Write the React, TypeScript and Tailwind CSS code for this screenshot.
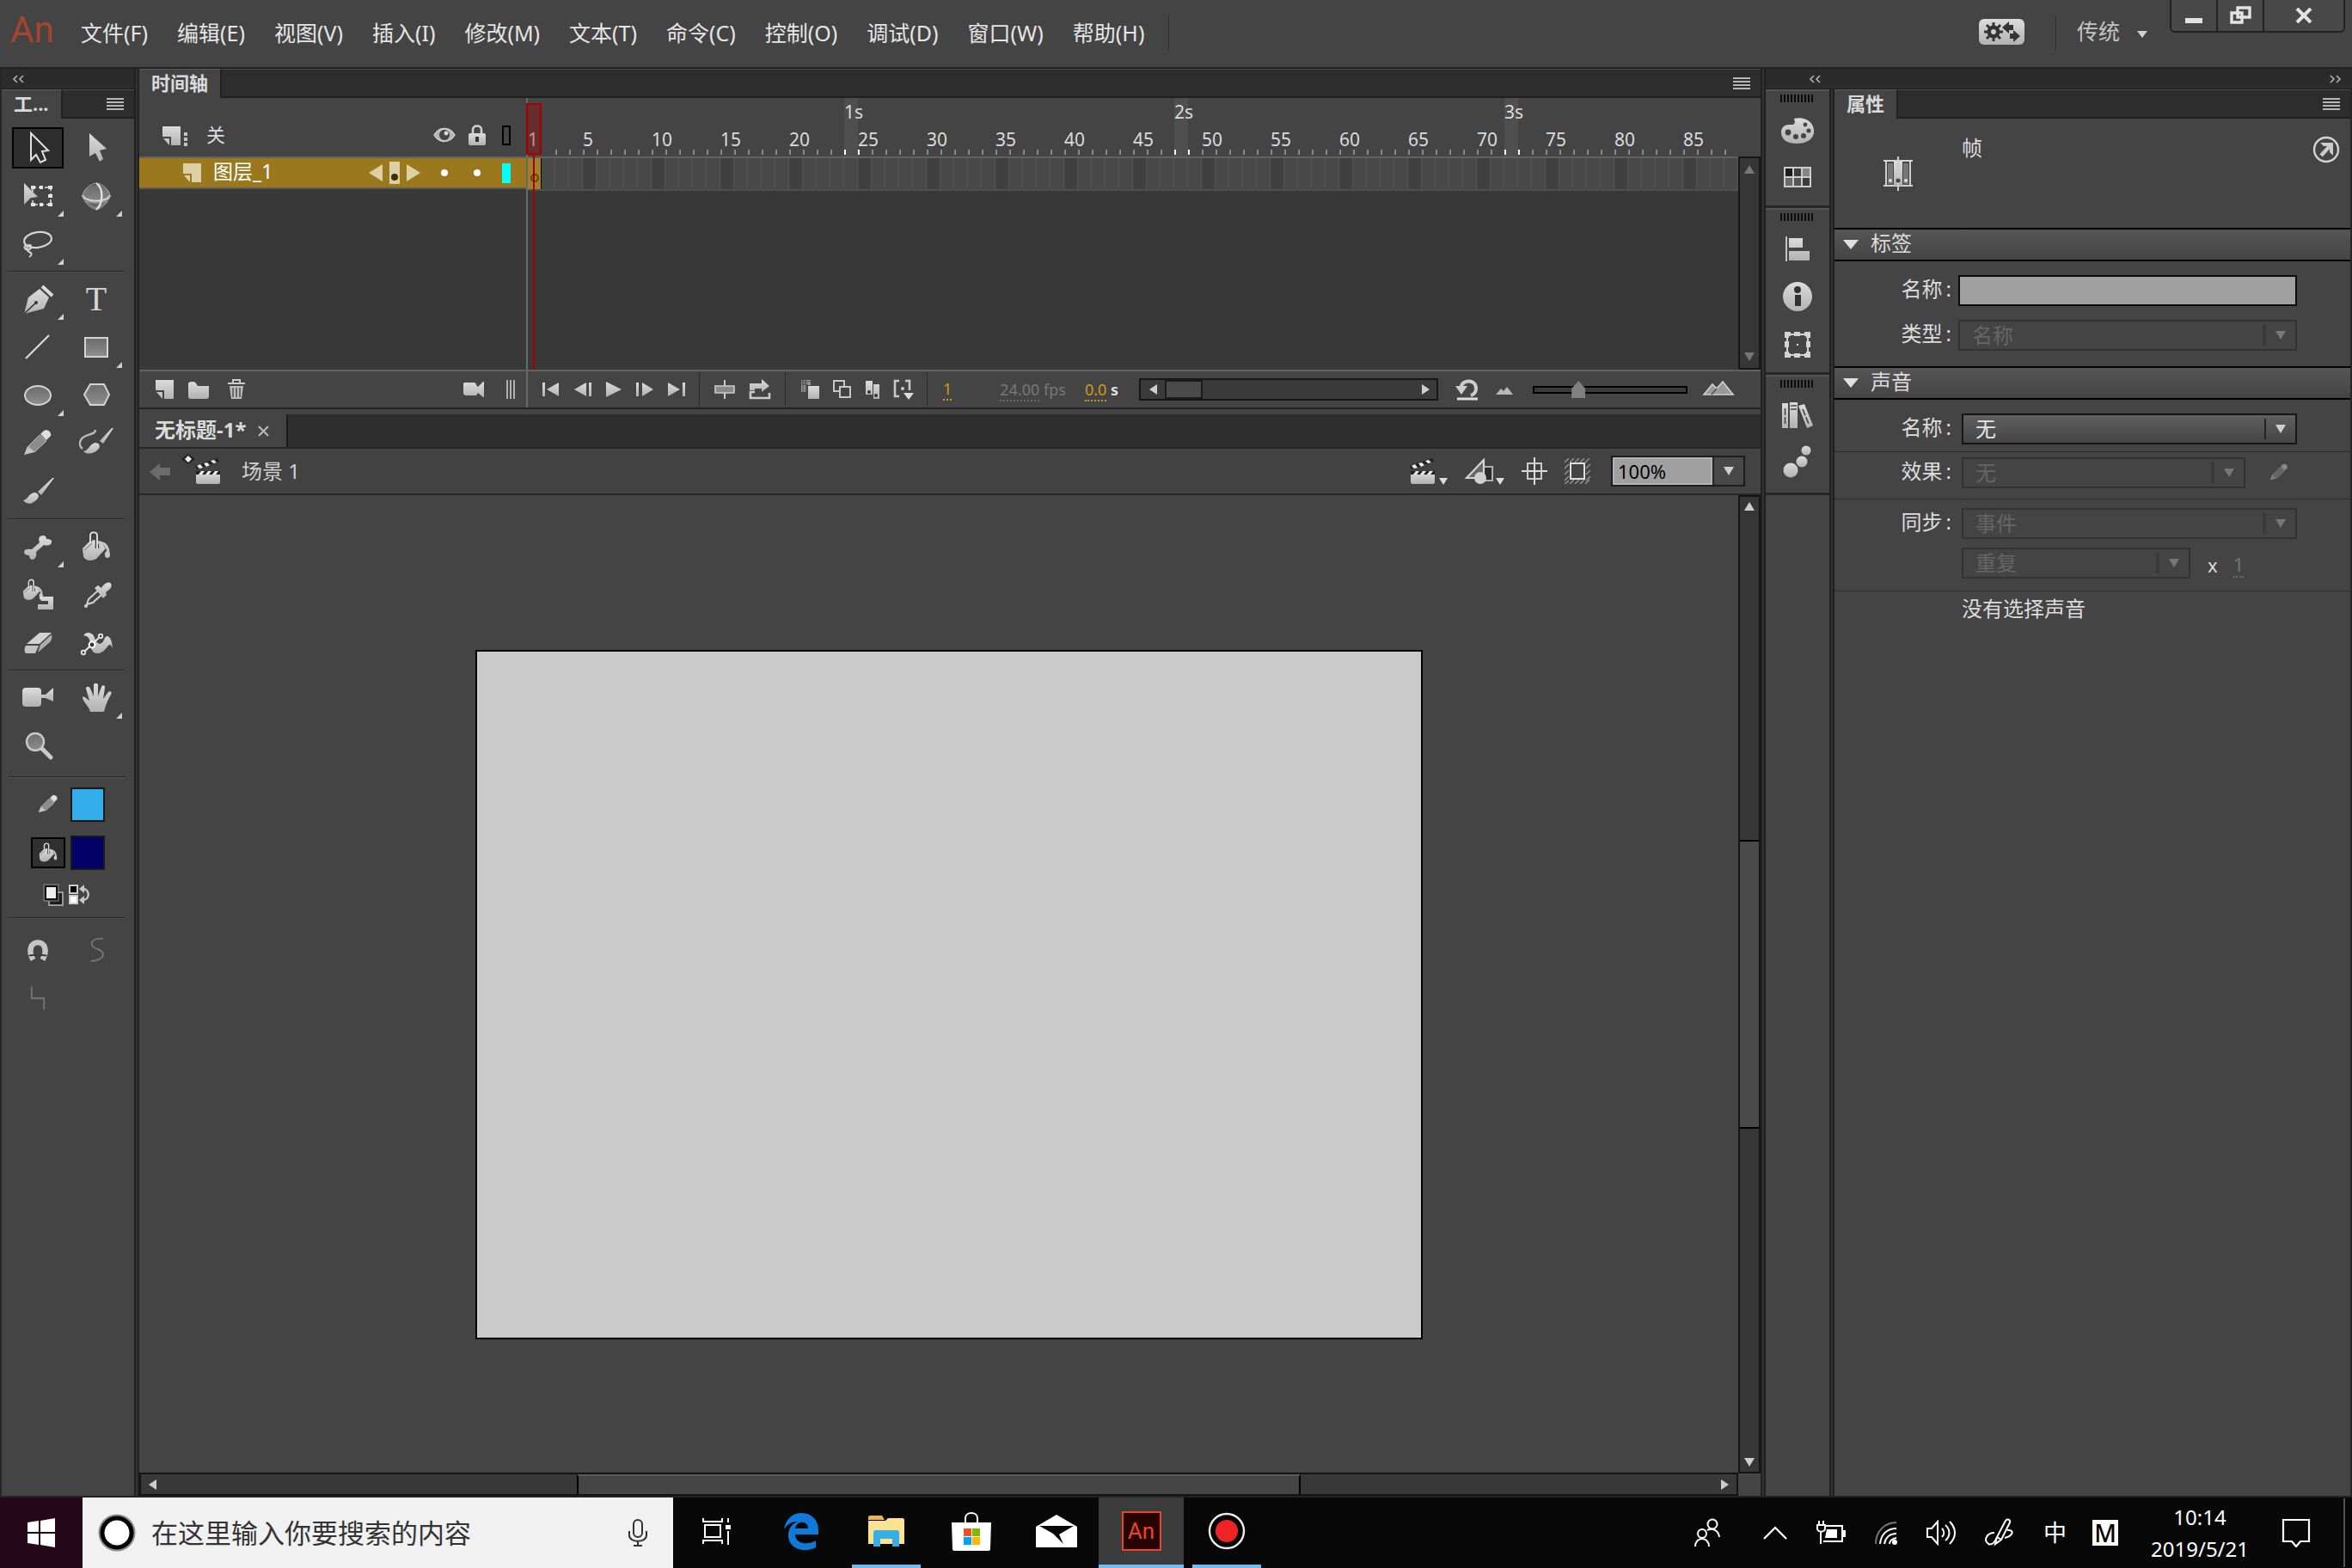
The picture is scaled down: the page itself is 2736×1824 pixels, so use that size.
import React from "react";

type Kids = { children?: React.ReactNode };

const L = "url(#light)";
const M = "url(#mid)";

function Defs() {
  return (
    <svg width="0" height="0" className="absolute" aria-hidden="true">
      <defs>
        <linearGradient id="light" x1="0" y1="0" x2="0" y2="1">
          <stop offset="0" stopColor="#dcdcdc" />
          <stop offset="1" stopColor="#b2b2b2" />
        </linearGradient>
        <linearGradient id="mid" x1="0" y1="0" x2="0" y2="1">
          <stop offset="0" stopColor="#6c6c6c" />
          <stop offset="1" stopColor="#8e8e8e" />
        </linearGradient>
      </defs>
    </svg>
  );
}

function Svg({ w = 40, h = 40, children }: { w?: number; h?: number } & Kids) {
  return (
    <svg width={w} height={h} viewBox={`0 0 ${w} ${h}`} fill="none" className="block shrink-0" aria-hidden="true">
      {children}
    </svg>
  );
}

const bucket = (
  <>
    <path d="M4 22 14 12l10 1 7 9-11 12c-5 3-13 3-15-3z" fill={L} />
    <path d="m6 24 9-8" stroke="#8f8f8f" strokeWidth="1.4" />
    <path d="M13 14V7c0-5 8-5 8 0v15" stroke="#333" strokeWidth="4.4" />
    <path d="M13 14V7c0-5 8-5 8 0v15" stroke="#dadada" strokeWidth="2.2" />
    <path d="M22 15c7 0 11 3 12 11" stroke="#c8c8c8" strokeWidth="3" />
    <ellipse cx="33" cy="29" rx="3" ry="4" fill="#c8c8c8" />
  </>
);

const I = {
  select: <path d="m12 3 20 20-7 1 4 10-6 3-5-9-6 6z" stroke="#e2e2e2" strokeWidth="2" />,
  sub: <path d="m12 3 20 18-8 2 4 10-4 3-5-10-7 4z" fill={L} />,
  transform: (
    <>
      <path d="M14 10h21v20H14z" stroke="#bbb" strokeWidth="2" strokeDasharray="4 3" />
      <path d="M12 8h5v4h-5zM22 8h4v4h-4zM32 8h5v4h-5zM32 18h5v4h-5zM12 28h5v4h-5zM22 28h4v4h-4zM32 28h5v4h-5z" fill="#e4e4e4" />
      <path d="m4 5 16 16-8 1-8 8z" fill={L} />
    </>
  ),
  globe: (
    <>
      <path d="M4 20a16 13 0 0 1 32 0L24 32h-8z" fill={M} />
      <path d="M7 25c4 4 22 4 26 0-3 4-8 8-13 9-5-1-10-5-13-9z" fill="#666" stroke="#aaa" />
      <path d="M4 19c2 9 30 9 32 0" stroke="#d8d8d8" strokeWidth="2.2" />
      <path d="M20 5c9 6 8 24 0 31" stroke="#e0e0e0" strokeWidth="2.4" />
      <path d="M20 5C12 6 5 13 4 20M20 5c8 1 15 8 16 15M4 20c2 8 9 14 16 16M36 20c-2 8-9 14-16 16" stroke="#aaa" strokeWidth="1" />
    </>
  ),
  lasso: (
    <>
      <ellipse cx="20" cy="15" rx="16" ry="9" transform="rotate(-8 20 15)" stroke="#d4d4d4" strokeWidth="2.2" />
      <path d="M6 21c-4 4 1 6 4 5s3-5 0-5-4 6 0 8 3 4 0 6" stroke="#d4d4d4" strokeWidth="2" />
    </>
  ),
  pen: (
    <>
      <path d="m4 37 5-19 13-10 11 10-6 13z" fill={L} />
      <path d="m4 37 14-13" stroke="#333" strokeWidth="1.6" />
      <circle cx="18" cy="24" r="2" fill="#333" />
      <path d="m25 5 12 11" stroke="#dcdcdc" strokeWidth="4" />
    </>
  ),
  line: <path d="M6 33 33 6" stroke="#dcdcdc" strokeWidth="2.2" />,
  rect: <path d="M7 9h26v22H7z" fill={M} stroke="#d4d4d4" strokeWidth="2" />,
  oval: <ellipse cx="20" cy="20" rx="15" ry="11" fill={M} stroke="#d4d4d4" strokeWidth="2" />,
  hex: <path d="m6 19 7-12h16l6 12-6 12H13z" fill={M} stroke="#d4d4d4" strokeWidth="2" />,
  pencil: (
    <>
      <path d="m9 23 13-13 8 7-14 13z" fill="#8c8c8c" stroke="#bdbdbd" strokeWidth="1" />
      <path d="m4 33 4-10 8 7z" fill="#c4c4c4" />
      <path d="m23 9 4-4c4-2 9 1 8 6l-5 5z" fill="#dedede" />
    </>
  ),
  paint: (
    <>
      <path d="M19 4c0 7-14 4-17 12-2 4-1 8 2 10" stroke="#bcbcbc" strokeWidth="2.4" />
      <path d="M38 2h2L28 20l-4-3z" fill={L} />
      <path d="M5 29c6 0 7-9 14-10 4 0 7 4 3 8s-12 7-17 2z" fill={L} />
    </>
  ),
  brush: (
    <>
      <path d="M37 4h2L24 24l-4-4z" fill={L} />
      <path d="M3 30c6-1 6-8 13-9 4 0 7 4 3 8s-10 8-16 1z" fill={L} />
    </>
  ),
  bone: (
    <path
      d="M4 26c0-3 4-4 9-3l9-8c-2-5 0-8 4-8 3 0 4 2 4 4 4 0 7 1 6 4-1 4-5 4-9 3l-9 8c1 5-1 8-4 9-3 0-4-3-4-5-3 0-6-1-6-4z"
      fill={L}
    />
  ),
  bucket,
  ink: (
    <>
      <g transform="scale(.72)">{bucket}</g>
      <path d="M22 22h16v15H20v-6h12v-4H22z" fill={L} />
      <path d="m18 22 6 6" stroke="#444" strokeWidth="2" />
    </>
  ),
  dropper: (
    <>
      <path d="m9 31 2-6 11-10 5 4-11 10z" stroke="#d4d4d4" strokeWidth="2" />
      <path d="m18 12 4-3 4 3c3-6 9-8 11-5s-1 7-6 10l1 3-4 4z" fill={L} />
      <circle cx="8" cy="33" r="2" fill="#d4d4d4" />
    </>
  ),
  eraser: (
    <>
      <path d="m7 21 15-13h14L22 21z" fill="#d2d2d2" />
      <path d="M6 23h15l-4 9H7c-2 0-3-2-2-7z" fill="#c2c2c2" />
      <path d="m23 22 13-12c1 4 0 7-2 9L20 31z" fill="#adadad" />
    </>
  ),
  widthTool: (
    <>
      <path d="M5 12c2-6 11-5 13 2s8 10 11 2 9-4 10 10c-5-12-6 6-18 6-9 0-7-14-10-18-1-2-5-3-6-2z" fill={L} />
      <path d="m5 31 20-19" stroke="#e8e8e8" strokeWidth="2" />
      <circle cx="15" cy="22" r="3.4" fill="#333" stroke="#fff" strokeWidth="2" />
      <circle cx="5" cy="31" r="2.2" fill="#333" stroke="#ddd" strokeWidth="2" />
      <circle cx="25" cy="12" r="2.2" fill="#333" stroke="#ddd" strokeWidth="2" />
    </>
  ),
  camera: (
    <>
      <rect x="2" y="8" width="22" height="22" rx="4" fill={L} />
      <path d="M24 16h5l9-8v16l-9-4h-5z" fill={L} />
    </>
  ),
  hand: (
    <path
      d="M13 36c-1-6-9-12-9-17 2-2 6 3 8 4L8 9c0-3 4-3 5 0l4 9V5c0-3 5-3 5 0v13l4-11c1-3 5-2 4 1l-2 13 6-8c2-2 5 0 3 3-4 7-6 12-8 20z"
      fill={L}
    />
  ),
  zoom: (
    <>
      <ellipse cx="17" cy="15" rx="10" ry="10" fill={M} stroke="#c8c8c8" strokeWidth="2.4" />
      <path d="m25 23 10 10" stroke="#cacaca" strokeWidth="5" strokeLinecap="round" />
    </>
  ),
  magnet: (
    <>
      <path d="M13 33C5 18 11 8 20 8s15 10 7 25" stroke="#c6c6c6" strokeWidth="8" />
      <path d="m7 27 9-1M24 26l9 1" stroke="#333" strokeWidth="2.4" />
    </>
  ),
  smooth: <path d="M30 2c-11 0-19 3-16 10s16 5 16 13c0 6-9 10-18 10" stroke="#747474" strokeWidth="2.4" />,
  straight: <path d="M11 2v17h18v17" stroke="#747474" strokeWidth="2.4" />,
};

function Tool({ label, icon, more, active, dim }: { label: string; icon?: React.ReactNode; more?: boolean; active?: boolean; dim?: boolean }) {
  return (
    <button
      aria-label={label}
      disabled={dim}
      className="relative flex h-14 w-[68px] items-center justify-center"
    >
      <span className={active ? "flex h-12 w-[60px] items-center justify-center border-2 border-black bg-[#2d2d2d]" : "flex items-center justify-center"}>
        {icon ? <Svg>{icon}</Svg> : <span className="font-['Liberation_Serif',serif] text-[40px] leading-10 text-[#d6d6d6]">T</span>}
      </span>
      {more && <span className="absolute bottom-1 right-1 size-[7px] bg-[#d0d0d0] [clip-path:polygon(100%_0,100%_100%,0_100%)]" />}
    </button>
  );
}

function Rule() {
  return <div className="my-[3px] h-0.5 w-[136px] border-t border-[#2a2a2a] bg-[#4e4e4e]" />;
}

function Burger() {
  return (
    <button aria-label="面板菜单" className="flex flex-col gap-0.5">
      {[0, 1, 2, 3].map((n) => (
        <span key={n} className="h-0.5 w-5 bg-[#b8b8b8]" />
      ))}
    </button>
  );
}

function Chev({ right }: { right?: boolean }) {
  return (
    <Svg w={14} h={10}>
      <path d={right ? "m1 1 4 4-4 4M8 1l4 4-4 4" : "m6 1-4 4 4 4M13 1 9 5l4 4"} stroke="#b4b4b4" strokeWidth="1.6" />
    </Svg>
  );
}

function PanelTabs({ title }: { title: string }) {
  return (
    <div className="flex h-[34px] shrink-0 items-stretch">
      <h2 className="flex items-center border-r-2 border-t border-r-[#222] border-t-[#5a5a5a] px-3.5 pb-1 text-[22px] font-bold leading-6 text-[#dadada]">{title}</h2>
      <div className="flex flex-1 items-center justify-end border-b-2 border-t border-b-[#1f1f1f] border-t-[#4a4a4a] bg-[#2d2d2d] pr-3">
        <Burger />
      </div>
    </div>
  );
}

function ToolsPanel() {
  return (
    <aside className="flex w-[156px] shrink-0 flex-col border-l-2 border-[#262626]">
      <div className="flex h-6 items-center border-b border-[#1f1f1f] bg-[#2b2b2b] pl-3">
        <Chev />
      </div>
      <PanelTabs title="工..." />
      <div className="flex flex-col px-2 pt-1.5">
        <div className="flex flex-wrap">
          <Tool label="选择工具" icon={I.select} active />
          <Tool label="部分选取工具" icon={I.sub} />
          <Tool label="任意变形工具" icon={I.transform} more />
          <Tool label="3D 旋转工具" icon={I.globe} more />
          <Tool label="套索工具" icon={I.lasso} more />
        </div>
        <Rule />
        <div className="flex flex-wrap">
          <Tool label="钢笔工具" icon={I.pen} more />
          <Tool label="文本工具" />
          <Tool label="线条工具" icon={I.line} />
          <Tool label="矩形工具" icon={I.rect} more />
          <Tool label="椭圆工具" icon={I.oval} more />
          <Tool label="多角星形工具" icon={I.hex} />
          <Tool label="铅笔工具" icon={I.pencil} />
          <Tool label="画笔工具 Y" icon={I.paint} />
          <Tool label="画笔工具 B" icon={I.brush} />
        </div>
        <Rule />
        <div className="flex flex-wrap">
          <Tool label="骨骼工具" icon={I.bone} more />
          <Tool label="颜料桶工具" icon={I.bucket} />
          <Tool label="墨水瓶工具" icon={I.ink} />
          <Tool label="滴管工具" icon={I.dropper} />
          <Tool label="橡皮擦工具" icon={I.eraser} />
          <Tool label="宽度工具" icon={I.widthTool} />
        </div>
        <Rule />
        <div className="flex flex-wrap pb-1">
          <Tool label="摄像头" icon={I.camera} />
          <Tool label="手形工具" icon={I.hand} more />
          <Tool label="缩放工具" icon={I.zoom} />
        </div>
        <Rule />
        <div className="flex items-center gap-1.5 pl-[26px] pt-2">
          <button aria-label="笔触" className="flex h-9 w-10 items-center justify-center">
            <svg width="28" height="28" viewBox="0 0 40 40" aria-hidden="true">{I.pencil}</svg>
          </button>
          <button aria-label="笔触颜色" className="h-10 w-10 border-2 border-[#181818] bg-[#32adea]" />
        </div>
        <div className="flex items-center gap-1.5 pl-[26px] pt-4">
          <button aria-label="填充" className="flex h-9 w-10 items-center justify-center border-2 border-black bg-[#303030]">
            <svg width="26" height="28" viewBox="0 0 40 40" fill="none" aria-hidden="true">{I.bucket}</svg>
          </button>
          <button aria-label="填充颜色" className="h-10 w-10 border-2 border-[#181818] bg-[#000066]" />
        </div>
        <div className="flex items-center gap-1.5 pb-2.5 pl-10 pt-4">
          <button aria-label="黑白">
            <Svg w={24} h={26}>
              <path d="M10 10h13v15H7v-5" fill="#1c1c1c" stroke="#999" strokeWidth="2" />
              <path d="M3 3h13v15H3z" fill="#eee" stroke="#111" strokeWidth="2" />
              <path d="M1 1h17v19H1z" stroke="#888" strokeWidth="1" />
            </Svg>
          </button>
          <button aria-label="交换颜色">
            <Svg w={26} h={26}>
              <path d="M1 2h9v9H1z" fill="#000" stroke="#ccc" strokeWidth="2" />
              <path d="M1 14h9v9H1z" fill="#fff" stroke="#ccc" strokeWidth="2" />
              <path d="M16 6c9 0 9 13 0 13" stroke="#c8c8c8" strokeWidth="2.4" />
              <path d="m12 6 6-5v10zM12 19l6-5v10z" fill="#c8c8c8" />
            </Svg>
          </button>
        </div>
        <Rule />
        <div className="flex flex-wrap pt-1.5">
          <Tool label="贴紧至对象" icon={<g transform="translate(4 4) scale(.8)">{I.magnet}</g>} />
          <Tool label="平滑" icon={<g transform="translate(4 4) scale(.8)">{I.smooth}</g>} dim />
          <Tool label="伸直" icon={<g transform="translate(4 4) scale(.8)">{I.straight}</g>} dim />
        </div>
      </div>
    </aside>
  );
}

const menus = ["文件(F)", "编辑(E)", "视图(V)", "插入(I)", "修改(M)", "文本(T)", "命令(C)", "控制(O)", "调试(D)", "窗口(W)", "帮助(H)"];

function MenuBar() {
  return (
    <header className="flex h-[78px] shrink-0 items-start">
      <div className="w-[94px] pl-3 pt-[11px] font-['Roboto',sans-serif] text-[42px] leading-[48px] text-[#a5452f]">An</div>
      <nav className="flex items-center gap-[34px] pt-5">
        {menus.map((m) => (
          <button key={m} className="whitespace-nowrap text-[25px] leading-9 text-[#e6e6e6]">{m}</button>
        ))}
      </nav>
      <div className="ml-7 mt-[18px] h-10 w-px bg-[#303030]" />
      <div className="flex-1" />
      <button aria-label="同步设置" className="mt-[22px]">
        <Svg w={53} h={30}>
          <rect width="53" height="30" rx="6" fill={L} />
          <circle cx="17" cy="15" r="5.5" stroke="#333" strokeWidth="4" />
          <path d="M17 4v22M6 15h22M9 7l16 16M25 7 9 23" stroke="#333" strokeWidth="3" />
          <circle cx="17" cy="15" r="3" fill="#ccc" />
          <path d="m27 10 8-7v4h5v6h-5v4zM48 20l-8 7v-4h-4v-6h4v-4z" fill="#333" />
        </Svg>
      </button>
      <div className="ml-9 mt-[18px] h-10 w-px bg-[#303030]" />
      <button className="ml-6 mt-4 flex items-center gap-5 text-[25px] leading-10 text-[#c4c4c4]">
        传统
        <span className="mt-2 h-2 w-3 bg-[#d0d0d0] [clip-path:polygon(0_0,100%_0,50%_100%)]" />
      </button>
      <div className="ml-[26px] mr-2 flex h-[38px] overflow-hidden rounded-b-md border-2 border-t-0 border-[#222] bg-[#484848]">
        <button aria-label="最小化" className="flex w-[54px] items-center justify-center border-r-2 border-[#222]">
          <span className="mt-3 h-1.5 w-5 bg-[#e4e4e4]" />
        </button>
        <button aria-label="还原" className="flex w-[54px] items-center justify-center border-r-2 border-[#222]">
          <Svg w={26} h={24}>
            <path d="M10 3h14v11H10zM3 9h12v11H3z" stroke="#e4e4e4" strokeWidth="3.4" />
          </Svg>
        </button>
        <button aria-label="关闭" className="flex w-[92px] items-center justify-center">
          <Svg w={20} h={18}>
            <path d="m2 1 16 16M18 1 2 17" stroke="#e4e4e4" strokeWidth="4" />
          </Svg>
        </button>
      </div>
    </header>
  );
}

const frames = Array.from({ length: 88 }, (_, i) => i + 1);

function LayerPage({ cream }: { cream?: boolean }) {
  return (
    <Svg w={24} h={24}>
      <path d="M1 1h21v22h-11V13H1z" fill={cream ? "#ddd0a4" : L} />
      <path d="M2 15h7v8z" fill={cream ? "#ddd0a4" : "#c4c4c4"} />
    </Svg>
  );
}

function LayerColumn() {
  return (
    <div className="flex w-[450px] shrink-0 flex-col">
      <div className="flex h-[70px] items-end border-b-2 border-[#616161] pb-3 pl-[26px]">
        <LayerPage />
        <Svg w={8} h={24}>
          <path d="M2 8h4v4H2zM2 14h4v4H2zM2 20h4v4H2z" fill="#c4c4c4" />
        </Svg>
        <span className="ml-5 text-[22px] leading-7">关</span>
        <div className="ml-auto flex items-center gap-3.5 pr-[18px]">
          <Svg w={26} h={22}>
            <path d="M1 11C7 1 19 1 25 11 19 21 7 21 1 11z" fill="#b4b4b4" stroke="#d4d4d4" strokeWidth="1.4" />
            <circle cx="13" cy="11" r="6" fill="#444" />
            <circle cx="15" cy="9" r="2.4" fill="#ddd" />
          </Svg>
          <Svg w={22} h={26}>
            <path d="M6 12V7c0-6 10-6 10 0v5" stroke="#cfcfcf" strokeWidth="2.6" />
            <rect x="1" y="11" width="20" height="14" rx="2" fill={L} />
            <path d="M9 15h4v6H9z" fill="#333" />
          </Svg>
          <span className="ml-1 h-[23px] w-2.5 border-2 border-black" />
        </div>
      </div>
      <div className="flex h-9 items-center border-b-2 border-[#5c5c5c] bg-[#9b771d] pl-[50px] pr-[18px] text-[23px] text-white">
        <LayerPage cream />
        <span className="mb-1 ml-3 leading-7">图层_1</span>
        <div className="ml-auto flex items-center">
          <span className="h-5 w-4 bg-[#ddd0a4] [clip-path:polygon(100%_0,100%_100%,0_50%)]" />
          <span className="ml-2 flex h-[26px] w-3 items-end justify-center bg-[#ddd0a4] pb-1">
            <span className="size-2 rounded-full bg-[#3c3010]" />
          </span>
          <span className="ml-2 h-5 w-4 bg-[#ddd0a4] [clip-path:polygon(0_0,100%_50%,0_100%)]" />
          <span className="ml-6 size-2 rounded-full bg-white" />
          <span className="ml-[30px] size-2 rounded-full bg-white" />
          <span className="ml-[25px] h-[23px] w-2.5 bg-[#00ffff]" />
        </div>
      </div>
      <div className="flex-1 bg-[#383838]" />
    </div>
  );
}

function FrameGrid() {
  return (
    <div className="relative flex min-w-0 flex-1 flex-col border-l-2 border-[#6a6a6a]">
      <div className="flex h-[70px] overflow-hidden border-b-2 border-[#616161]">
        {frames.map((f) => {
          const sec = f % 24 === 0;
          const edge = sec || f % 24 === 1;
          return (
            <div
              key={f}
              className={
                "flex w-4 shrink-0 flex-col whitespace-nowrap text-[21px] leading-6 " + (sec ? "bg-[#4f4f4f]" : "")
              }
            >
              <span className="mt-1 h-8 w-0">{sec ? `${f / 24}s` : ""}</span>
              <span className="h-6 w-0">{f === 1 || f % 5 === 0 ? f : ""}</span>
              <span className={"h-1.5 w-0.5 " + (f < 3 ? "" : edge ? "bg-white" : "bg-[#8a8a8a]")} />
            </div>
          );
        })}
      </div>
      <div className="flex h-[38px] overflow-hidden border-b-2 border-[#505050]">
        {frames.map((f) => (
          <div
            key={f}
            className={
              "flex w-4 shrink-0 items-end justify-center border-r " +
              (f === 1 ? "border-black bg-[#a37f2a]" : f % 5 === 0 ? "border-[#545454] bg-[#404040]" : "border-[#545454] bg-[#484848]")
            }
          >
            {f === 1 && <span className="mb-2 size-2.5 rounded-full border-2 border-[#5c4410]" />}
          </div>
        ))}
      </div>
      <div className="flex-1 bg-[#383838]" />
      <div className="absolute bottom-0 -left-0.5 top-1.5 flex w-[18px] flex-col items-center">
        <span className="h-[60px] w-full border-2 border-[#a80000] bg-[#a80000]/35" />
        <span className="w-0.5 flex-1 bg-[#a80000]" />
      </div>
    </div>
  );
}

function Arrow({ dir, dim }: { dir: "up" | "down" | "left" | "right"; dim?: boolean }) {
  const d = { up: "M1 12 7 2l6 10z", down: "m1 2 6 10 6-10z", left: "m12 1-9 6 9 6z", right: "m2 1 9 6-9 6z" }[dir];
  return (
    <Svg w={14} h={14}>
      <path d={d} fill={dim ? "#777" : "#cfcfcf"} />
    </Svg>
  );
}

function CtlSep() {
  return <span className="h-10 w-px bg-[#2c2c2c]" />;
}

function TimelineControls() {
  return (
    <div className="flex h-[46px] shrink-0 items-stretch border-b-2 border-t-2 border-b-[#222] border-t-[#616161]">
      <div className="flex w-[450px] shrink-0 items-center pl-[18px] pr-3">
        <button aria-label="新建图层"><LayerPage /></button>
        <button aria-label="新建文件夹" className="ml-3.5">
          <Svg w={26} h={22}>
            <path d="M1 4c0-2 8-3 9 0l2 3h13v12c0 2-1 3-3 3H4c-2 0-3-1-3-3z" fill={L} />
          </Svg>
        </button>
        <button aria-label="删除" className="ml-5">
          <Svg w={22} h={24}>
            <path d="M1 5h20M7 4V1h8v3" stroke="#ccc" strokeWidth="2" />
            <path d="M3 8h16l-2 15H5z" fill="#bbb" />
            <path d="M7 10v11M11 10v11M15 10v11" stroke="#444" strokeWidth="1.4" />
          </Svg>
        </button>
        <button aria-label="添加摄像头" className="ml-auto">
          <Svg w={26} h={20}>
            <path d="M1 4c0-2 1-2 3-2h9c2 0 3 1 3 3l2 2 6-6h1v18h-1l-6-5-2 3H3l-2-2z" fill={L} />
          </Svg>
        </button>
        <Svg w={36} h={22}>
          <path d="M26 0v22M30 0v22M34 0v22" stroke="#b0b0b0" strokeWidth="2" />
        </Svg>
      </div>
      <div className="flex min-w-0 flex-1 items-center border-l-2 border-[#6a6a6a] pl-4">
        <div className="flex items-center gap-[15px]">
          <button aria-label="转到第一帧"><Svg w={22} h={20}><path d="M1 2h3v16H1zM20 2v16L6 10z" fill={L} /></Svg></button>
          <button aria-label="后退一帧"><Svg w={22} h={20}><path d="M18 2h3v16h-3zM15 2v16L1 10z" fill={L} /></Svg></button>
          <button aria-label="播放"><Svg w={20} h={20}><path d="m1 1 18 9-18 9z" fill={L} /></Svg></button>
          <button aria-label="前进一帧"><Svg w={22} h={20}><path d="M1 2h3v16H1zM8 2l13 8-13 8z" fill={L} /></Svg></button>
          <button aria-label="转到最后一帧"><Svg w={22} h={20}><path d="M18 2h3v16h-3zM1 2v16l14-8z" fill={L} /></Svg></button>
          <CtlSep />
        </div>
        <div className="flex items-center gap-[15px] pl-[17px]">
          <button aria-label="帧居中"><Svg w={24} h={22}><path d="M12 0v22" stroke="#ccc" strokeWidth="2" /><path d="M1 7h22v8H1z" fill="#888" stroke="#ccc" strokeWidth="1.6" /></Svg></button>
          <button aria-label="循环"><Svg w={28} h={24}><path d="M8 15H3v7h22v-6" stroke="#ccc" strokeWidth="2.6" /><path d="M2 13V5h14V0l9 8-9 7v-4H8v2z" fill={L} /></Svg></button>
          <CtlSep />
        </div>
        <div className="flex items-center gap-[15px] pl-[18px]">
          <button aria-label="绘图纸外观"><Svg w={22} h={22}><path d="M0 0h11v6H6v8H0z" fill="#999" /><path d="M0 2h11M0 5h8M2 0v14M5 0v14" stroke="#444" strokeWidth="1" /><path d="M8 7h13v15H8z" fill={L} /></Svg></button>
          <button aria-label="绘图纸外观轮廓"><Svg w={22} h={22}><path d="M1 1h12v12H1z" stroke="#c8c8c8" strokeWidth="2" /><path d="M8 8h12v12H8z" fill="#444" stroke="#c8c8c8" strokeWidth="2" /></Svg></button>
          <button aria-label="编辑多个帧"><Svg w={18} h={22}><path d="M1 1h8v16H1zM10 5h7v17h-7z" fill={L} /><circle cx="5" cy="14" r="2" fill="#333" /><circle cx="13" cy="18" r="2" fill="#333" /></Svg></button>
          <button aria-label="修改标记"><Svg w={24} h={24}><path d="M7 2H2v18h5M14 2h5v11" stroke="#c8c8c8" strokeWidth="2.6" /><circle cx="11" cy="11" r="2" fill="#ccc" /><path d="M12 16h12l-6 8z" fill="#ddd" /></Svg></button>
          <CtlSep />
        </div>
        <div className="flex items-center text-lg leading-6">
          <button aria-label="当前帧" className="ml-[18px] border-b-2 border-dotted border-[#c8961a] text-[#d29a18]">1</button>
          <span className="ml-14 text-[#787878]"><span className="border-b-2 border-dotted border-[#6a6a6a]">24.00</span> fps</span>
          <span className="ml-[22px] whitespace-nowrap"><span className="border-b-2 border-dotted border-[#c8961a] text-[#d29a18]">0.0</span> <b>s</b></span>
        </div>
        <div className="ml-6 flex h-[26px] w-[348px] items-center justify-between border-2 border-[#161616] bg-[#3a3a3a]">
          <div className="flex h-full items-center">
            <button aria-label="向左滚动" className="flex w-7 justify-center"><Arrow dir="left" /></button>
            <span className="h-full w-11 border-2 border-[#1c1c1c] bg-[#4a4a4a]" />
          </div>
          <button aria-label="向右滚动" className="flex w-6 justify-center"><Arrow dir="right" /></button>
        </div>
        <button aria-label="重置时间轴缩放" className="ml-5">
          <Svg w={28} h={26}>
            <path d="M2 24h24" stroke="#ddd" strokeWidth="3" />
            <path d="M7 10c0-8 17-10 17 2 0 5-3 7-6 8" stroke="#ccc" strokeWidth="4" />
            <path d="M0 9h14l-7 10z" fill="#ccc" />
          </Svg>
        </button>
        <Svg w={62} h={20}>
          <path d="m19 16 6-7 3 3 4-5 7 9z" fill="#b8b8b8" />
        </Svg>
        <input
          type="range"
          aria-label="时间轴缩放"
          min={0}
          max={100}
          defaultValue={27}
          className="h-[9px] w-[180px] appearance-none border-2 border-black bg-[#3a3a3a] [&::-webkit-slider-thumb]:h-5 [&::-webkit-slider-thumb]:w-4 [&::-webkit-slider-thumb]:appearance-none [&::-webkit-slider-thumb]:bg-[#808080] [&::-webkit-slider-thumb]:[clip-path:polygon(50%_0,100%_45%,100%_100%,0_100%,0_45%)]"
        />
        <Svg w={60} h={20}>
          <path d="m19 16 10-12 5 5 7-8 12 15z" fill="#999" stroke="#d0d0d0" strokeWidth="1.6" />
          <path d="m28 16 6-7" stroke="#555" strokeWidth="1.6" />
        </Svg>
      </div>
    </div>
  );
}

function Timeline() {
  return (
    <section className="flex h-[396px] shrink-0 flex-col">
      <PanelTabs title="时间轴" />
      <div className="flex min-h-0 flex-1">
        <LayerColumn />
        <FrameGrid />
        <div className="mt-[68px] flex w-[26px] shrink-0 flex-col items-center justify-between border-2 border-[#161616] bg-[#363636] py-1.5">
          <Arrow dir="up" dim />
          <Arrow dir="down" dim />
        </div>
      </div>
      <TimelineControls />
    </section>
  );
}

function Clapper() {
  return (
    <Svg w={30} h={30}>
      <path d="M1 15h28v13c0 1-1 2-2 2H3c-1 0-2-1-2-2z" fill={L} />
      <path d="M1 15h28v4H1z" fill="#222" />
      <path d="m4 19 3-4h4l-3 4zM12 19l3-4h4l-3 4zM20 19l3-4h4l-3 4z" fill="#eee" />
      <path d="m0 9 26-9 2 4L2 13z" fill="#222" />
      <path d="m2 9 4-2 3 4-4 1zM10 6l4-1 3 3-4 2zM18 3l4-1 3 3-4 1z" fill="#eee" />
    </Svg>
  );
}

function Drop() {
  return <span className="-mr-2 mt-6 h-2 w-2.5 bg-[#ddd] [clip-path:polygon(0_0,100%_0,50%_100%)]" />;
}

function DocumentArea() {
  return (
    <section className="mt-1 flex min-h-0 flex-1 flex-col">
      <div className="flex h-10 shrink-0 border-t-2 border-[#444] bg-[#2d2d2d]">
        <div className="flex items-center gap-3.5 border-r-2 border-[#1c1c1c] bg-[#444] pl-[18px] pr-5 text-2xl font-bold leading-7 text-[#dadada]">
          <span className="mb-0.5">无标题-1*</span>
          <button aria-label="关闭文档">
            <Svg w={13} h={13}>
              <path d="m1 1 11 11M12 1 1 12" stroke="#bbb" strokeWidth="2" />
            </Svg>
          </button>
        </div>
      </div>
      <div className="flex h-14 shrink-0 items-center border-b-2 border-t-2 border-[#262626] bg-[#424242] pl-[11px] pr-[18px]">
        <button aria-label="返回">
          <Svg w={26} h={22}><path d="M1 12 13 2v5h12v9H13v6z" fill="#6c6c6c" /></Svg>
        </button>
        <Svg w={28} h={40}>
          <path d="m20 0 8 6-8 6-8-6z" fill="#222" />
          <path d="m20 2 4 4-4 4-4-4z" fill="#eee" />
        </Svg>
        <Clapper />
        <span className="ml-6 text-2xl leading-8 text-[#d2d2d2]">场景 1</span>
        <div className="ml-auto flex items-center">
          <button aria-label="编辑场景" className="flex items-center gap-1"><Clapper /><Drop /></button>
          <button aria-label="编辑元件" className="ml-7 flex items-center gap-0.5">
            <Svg w={34} h={30}>
              <path d="M22 10h10v16H18" stroke="#b0b0b0" strokeWidth="2" fill="#2c2c2c" />
              <path d="M2 23 22 2v21z" fill="#666" stroke="#d4d4d4" strokeWidth="2.2" />
              <circle cx="18" cy="23" r="7" fill="#d0d0d0" />
            </Svg>
            <Drop />
          </button>
          <button aria-label="舞台居中" className="ml-7">
            <Svg w={30} h={32}>
              <path d="M15 0v32M0 16h30" stroke="#ddd" strokeWidth="2" />
              <path d="M7 7h16v18H7z" stroke="#ccc" strokeWidth="2" />
              <path d="M11 16h8M15 12v8" stroke="#ddd" strokeWidth="2" />
            </Svg>
          </button>
          <button aria-label="剪切掉舞台范围以外的内容" className="ml-5">
            <Svg w={30} h={30}>
              <path d="M0 5 5 0M6 5l5-5M12 5l5-5M18 5l5-5M24 5l5-5M0 12l5-5M0 19l5-5M0 26l5-5M0 30l5-4M6 30l5-5M12 30l5-5M18 30l5-5M24 30l5-5M25 12l5-5M25 19l5-5M25 26l5-5" stroke="#999" strokeWidth="1.4" />
              <path d="M7 6h16v18H7z" stroke="#e0e0e0" strokeWidth="2" fill="#444" />
            </Svg>
          </button>
          <div className="ml-6 grid h-9 w-[156px] border-2 border-[#1c1c1c] bg-[#484848]">
            <select aria-label="缩放比例" className="col-start-1 row-start-1 mr-9 appearance-none border-2 border-[#b4b4b4] bg-[#a0a0a0] px-1 text-[22px] leading-6 text-black">
              <option>100%</option>
            </select>
            <span className="pointer-events-none col-start-1 row-start-1 flex w-9 items-center justify-center justify-self-end border-l-2 border-[#222]"><Arrow dir="down" /></span>
          </div>
        </div>
      </div>
      <div className="flex min-h-0 flex-1">
        <div className="flex min-w-0 flex-1 flex-col">
          <main className="flex min-h-0 flex-1 items-center justify-center pl-6 pt-6">
            <div className="aspect-[1102/802] w-[1102px] border-2 border-black bg-[#cbcbcb]" />
          </main>
          <div className="flex h-[27px] shrink-0 items-center justify-between border-2 border-[#141414] bg-[#383838] px-1.5">
            <button aria-label="向左滚动"><Arrow dir="left" /></button>
            <span className="h-full w-[842px] border-x-2 border-t-2 border-x-black border-t-[#5a5a5a] bg-[#454545]" />
            <button aria-label="向右滚动"><Arrow dir="right" /></button>
          </div>
        </div>
        <div className="mb-[26px] flex w-[26px] shrink-0 flex-col items-center justify-between border-2 border-[#141414] bg-[#363636] py-1">
          <button aria-label="向上滚动"><Arrow dir="up" /></button>
          <span className="h-[336px] w-full border-y-2 border-black bg-[#4a4a4a]" />
          <button aria-label="向下滚动"><Arrow dir="down" /></button>
        </div>
      </div>
    </section>
  );
}

function Grip() {
  return (
    <Svg w={40} h={9}>
      <path d="M0 4.5h39" stroke="#0c0c0c" strokeWidth="9" strokeDasharray="2 2" />
    </Svg>
  );
}

function DockGroup({ children }: Kids) {
  return <div className="flex flex-col items-center gap-4 border-b-[3px] border-t-2 border-b-[#262626] border-t-[#555] pb-4 pt-1">{children}</div>;
}

function Dock() {
  return (
    <div className="flex w-[74px] shrink-0 flex-col">
      <DockGroup>
        <Grip />
        <button aria-label="颜色">
          <Svg w={40} h={34}>
            <path d="M16 3c10-3 22 2 23 13 1 12-10 16-20 16S1 28 1 19c0-6 4-9 10-9 5 0 7 0 5-7z" fill={L} />
            <ellipse cx="9" cy="19" rx="3.4" ry="3.4" fill="#444" />
            <ellipse cx="18" cy="24" rx="3" ry="3" fill="#444" />
            <ellipse cx="27" cy="23" rx="3" ry="3" fill="#444" />
            <ellipse cx="33" cy="17" rx="2.6" ry="2.6" fill="#444" />
            <ellipse cx="29" cy="10" rx="2.4" ry="2.4" fill="#444" />
          </Svg>
        </button>
        <button aria-label="样本" className="mb-1 mt-2">
          <Svg w={34} h={26}>
            <path d="M1 1h32v24H1z" fill="#ccc" />
            <path d="M3 3h8v9H3z" fill="#1c1c1c" />
            <path d="M13 3h8v9h-8z" fill="#3c3c3c" />
            <path d="M23 3h8v9h-8z" fill="#858585" />
            <path d="M3 14h8v9H3z" fill="#6a6a6a" />
            <path d="M13 14h8v9h-8z" fill="#555" />
            <path d="M23 14h8v9h-8z" fill="#3c3c3c" />
          </Svg>
        </button>
      </DockGroup>
      <DockGroup>
        <Grip />
        <button aria-label="对齐">
          <Svg w={32} h={32}>
            <path d="M3 2v29" stroke="#c4c4c4" strokeWidth="2" />
            <path d="M6 4h16v11H6zM6 19h24v11H6z" fill={L} />
          </Svg>
        </button>
        <button aria-label="信息" className="mt-1.5">
          <Svg w={36} h={36}>
            <circle cx="18" cy="18" r="17" fill={L} />
            <circle cx="18" cy="10" r="4" fill="#333" />
            <path d="M15 16h7v13h-7z" fill="#333" />
          </Svg>
        </button>
        <button aria-label="变形" className="mt-1.5">
          <Svg w={32} h={32}>
            <path d="M4 4h24v24H4z" stroke="#d4d4d4" strokeWidth="2" />
            <path d="M1 1h7v7H1zM12 1h7v7h-7zM24 1h7v7h-7zM1 12h5v7H1zM26 12h5v7h-5zM1 24h7v7H1zM12 24h7v7h-7zM24 24h7v7h-7z" fill="#d4d4d4" />
            <path d="M6 6h20v20H6z" fill="#444" />
            <path d="M15 15h2v2h-2z" fill="#ddd" />
          </Svg>
        </button>
      </DockGroup>
      <DockGroup>
        <Grip />
        <button aria-label="库">
          <Svg w={36} h={32}>
            <path d="M0 2h7v29H0zM9 1h9v30H9z" fill={L} />
            <path d="m19 5 7-2 10 25-7 3z" fill={L} />
            <path d="M3.5 8v18M10 5h7M10 9h7M24 9l7 17" stroke="#444" strokeWidth="1.6" strokeDasharray="8 2" />
          </Svg>
        </button>
        <button aria-label="动画预设" className="mt-0.5">
          <Svg w={34} h={40}>
            <circle cx="9" cy="30" r="8.5" fill={L} />
            <circle cx="22" cy="20" r="6.5" fill={L} />
            <circle cx="27" cy="7" r="5.5" fill={L} />
          </Svg>
        </button>
      </DockGroup>
    </div>
  );
}

function Section({ title }: { title: string }) {
  return (
    <h3 className="flex h-[39px] items-center gap-3.5 border-y-2 border-black bg-gradient-to-b from-[#565656] to-[#444] pl-2.5 text-2xl leading-8">
      <span className="h-[11px] w-[18px] bg-[#e0e0e0] [clip-path:polygon(0_0,100%_0,50%_100%)]" />
      <span className="mb-1">{title}</span>
    </h3>
  );
}

function Pick({ id, value, width, on, label }: { id: string; value: string; width: string; on?: boolean; label?: string }) {
  return (
    <div className={"grid h-9 shrink-0 border-2 " + width + (on ? " border-[#161616] bg-gradient-to-b from-[#606060] to-[#444]" : " border-[#333] bg-[#444]")}>
      <select
        id={id}
        aria-label={label}
        disabled={!on}
        className={"col-start-1 row-start-1 w-full appearance-none pl-3.5 text-2xl leading-7 opacity-100 " + (on ? "text-[#e6e6e6]" : "text-[#666]")}
      >
        <option>{value}</option>
      </select>
      <span className="pointer-events-none col-start-1 row-start-1 flex items-center gap-2.5 self-center justify-self-end pr-2.5">
        <span className={"h-6 border-l-2 " + (on ? "border-[#222]" : "w-1 border-r-2 border-[#393939]")} />
        <Arrow dir="down" dim={!on} />
      </span>
    </div>
  );
}

function Field({ id, text }: { id: string; text: string }) {
  return (
    <label htmlFor={id} className="w-[138px] shrink-0 pr-0.5 text-right text-2xl leading-8">
      {text}
      <span className="pl-1">:</span>
    </label>
  );
}

function PropertiesPanel() {
  return (
    <div className="flex w-[602px] shrink-0 flex-col border-r-2 border-[#262626]">
      <PanelTabs title="属性" />
      <div className="flex h-[127px] items-start pl-14 pr-3">
        <div className="pt-11">
          <Svg w={36} h={40}>
            <path d="M1 5h34M1 34h34" stroke="#d4d4d4" strokeWidth="2" />
            <path d="M4 6v28M32 6v28" stroke="#ccc" strokeWidth="2" />
            <path d="M6 8h6v24H6zM24 8h6v24h-6z" fill="#777" />
            <path d="M13 6h10v28H13z" fill={L} />
            <path d="M18 0v40" stroke="#ccc" strokeWidth="2" />
            <circle cx="9" cy="28" r="2" fill="#ddd" />
            <circle cx="18" cy="28" r="2.5" fill="#444" />
            <circle cx="27" cy="28" r="2" fill="#ddd" />
          </Svg>
        </div>
        <span className="ml-14 mt-[18px] text-2xl leading-8">帧</span>
        <button aria-label="帮助" className="ml-auto mt-5">
          <Svg w={32} h={32}>
            <circle cx="16" cy="16" r="14" stroke="#d4d4d4" strokeWidth="2.4" />
            <path d="m10 23 11-12" stroke="#ccc" strokeWidth="4.4" />
            <path d="M9 8h15v15l-4-4V12h-7z" fill="#ccc" />
          </Svg>
        </button>
      </div>
      <Section title="标签" />
      <div className="flex flex-col gap-4 pb-[18px] pt-4">
        <div className="flex gap-1.5">
          <Field id="label-name" text="名称" />
          <input id="label-name" type="text" className="h-9 w-[394px] border-2 border-[#0c0c0c] bg-[#a0a0a0] px-2 text-2xl text-black" />
        </div>
        <div className="flex gap-1.5">
          <Field id="label-type" text="类型" />
          <Pick id="label-type" value="名称" width="w-[394px]" />
        </div>
      </div>
      <Section title="声音" />
      <div className="flex gap-2.5 border-b border-[#2c2c2c] pb-2 pt-4">
        <Field id="sound-name" text="名称" />
        <Pick id="sound-name" value="无" width="w-[390px]" on />
      </div>
      <div className="flex gap-2.5 border-b border-[#2c2c2c] pb-3 pt-1.5">
        <Field id="sound-effect" text="效果" />
        <Pick id="sound-effect" value="无" width="w-[330px]" />
        <button aria-label="编辑声音封套" disabled className="ml-4 opacity-45">
          <svg width="26" height="28" viewBox="0 0 40 40" aria-hidden="true">{I.pencil}</svg>
        </button>
      </div>
      <div className="flex flex-col gap-2.5 border-b border-[#2c2c2c] pb-3.5 pt-2.5">
        <div className="flex gap-2.5">
          <Field id="sound-sync" text="同步" />
          <Pick id="sound-sync" value="事件" width="w-[390px]" />
        </div>
        <div className="flex items-center pl-[148px] text-[22px]">
          <Pick id="sound-repeat" label="重复方式" value="重复" width="w-[266px]" />
          <span className="ml-5 mt-1 leading-7">x</span>
          <span className="ml-[18px] mt-1 border-b-2 border-dotted border-[#6a6a6a] leading-7 text-[#757575]">1</span>
        </div>
      </div>
      <p className="pl-[148px] pt-1 text-2xl leading-8">没有选择声音</p>
    </div>
  );
}

function TaskButton({ label, children, running, active }: { label: string; running?: boolean; active?: boolean } & Kids) {
  return (
    <button aria-label={label} className={"flex w-[99px] flex-col items-center " + (active ? "bg-[#3b3b3b]" : "")}>
      <span className="flex flex-1 items-center">{children}</span>
      <span className={"h-1 " + (active ? "w-full bg-[#76b9ed]" : running ? "w-20 bg-[#76b9ed]" : "w-0")} />
    </button>
  );
}

function Taskbar() {
  return (
    <footer className="flex h-[82px] shrink-0 bg-[#080808] text-white">
      <button aria-label="开始" className="flex w-24 items-center justify-center bg-[#25071a]">
        <Svg w={34} h={34}>
          <path d="m1 5 13-2v13H1zM16 3l17-3v16H16zM1 18h13v13L1 29zM16 18h17v16l-17-3z" fill="#fff" />
        </Svg>
      </button>
      <div className="flex w-[687px] items-center bg-[#f1f1f1] pl-[18px] pr-6">
        <Svg w={44} h={44}>
          <circle cx="22" cy="22" r="20" stroke="#8c8c8c" strokeWidth="3" />
          <circle cx="22" cy="22" r="17" stroke="#000" strokeWidth="5" fill="#fff" />
        </Svg>
        <input
          type="text"
          aria-label="搜索"
          placeholder="在这里输入你要搜索的内容"
          className="ml-[18px] min-w-0 flex-1 bg-transparent text-[31px] leading-10 text-[#333] placeholder:text-[#333] placeholder:opacity-100"
        />
        <button aria-label="语音搜索">
          <Svg w={34} h={34}>
            <rect x="12" y="2" width="10" height="20" rx="5" stroke="#333" strokeWidth="2" />
            <path d="M7 15v5c0 9 20 9 20 0v-5M17 27v6M12 32h10" stroke="#333" strokeWidth="2" />
          </Svg>
        </button>
      </div>
      <TaskButton label="任务视图">
        <Svg w={34} h={34}>
          <path d="M4 10h18v14H4zM2 2v4h22V2M2 32v-4h22v4M31 2v5M31 17v16" stroke="#fff" strokeWidth="2" />
          <path d="M28 10h6v5h-6z" fill="#fff" />
        </Svg>
      </TaskButton>
      <TaskButton label="Microsoft Edge">
        <Svg w={42} h={44}>
          <path d="M1 20C3 8 11 1 21 1c13 0 20 9 20 20v5H14c0 11 15 13 24 7v8c-13 7-32 2-32-14 0-8 5-14 11-16C10 11 5 14 1 20zm13-1h15c0-9-13-10-15 0z" fill="#0f7ad8" />
        </Svg>
      </TaskButton>
      <TaskButton label="文件资源管理器" running>
        <Svg w={44} h={38}>
          <path d="M1 3c0-1 1-2 2-2h14l3 5H1z" fill="#e8b84a" />
          <path d="M1 7h20l3-3h17c1 0 2 1 2 2v28H1z" fill="#fbe394" />
          <path d="M7 37V21c0-2 1-3 3-3h24c2 0 3 1 3 3v16h-8v-9H15v9z" fill="#39aee4" />
        </Svg>
      </TaskButton>
      <TaskButton label="Microsoft Store">
        <Svg w={48} h={46}>
          <path d="M17 13V8c0-8 14-8 14 0v5" stroke="#fff" strokeWidth="2" />
          <path d="M1 13h46l-1 31c0 1-1 2-2 2H4c-1 0-2-1-2-2z" fill="#fff" />
          <path d="M15 20h9v9h-9z" fill="#f05123" />
          <path d="M25 20h9v9h-9z" fill="#7fba00" />
          <path d="M15 30h9v9h-9z" fill="#00a4ef" />
          <path d="M25 30h9v9h-9z" fill="#fdb900" />
        </Svg>
      </TaskButton>
      <TaskButton label="邮件">
        <Svg w={48} h={40}>
          <path d="M0 15 24 1l24 14v24H0z" fill="#fff" />
          <path d="M4 14h40L27 24l5 11-12-12z" fill="#080808" />
        </Svg>
      </TaskButton>
      <TaskButton label="Adobe Animate" active>
        <span className="flex h-[46px] w-[46px] items-center justify-center border-2 border-[#e8452c] bg-[#260400] font-['Roboto',sans-serif] text-[26px] text-[#e8452c]">An</span>
      </TaskButton>
      <TaskButton label="录制" running>
        <Svg w={44} h={44}>
          <circle cx="22" cy="22" r="20" fill="#000" stroke="#eee" strokeWidth="2.4" />
          <circle cx="22" cy="22" r="13" fill="#ee2424" />
        </Svg>
      </TaskButton>
      <div className="ml-auto flex items-center gap-[34px] pr-2">
        <Svg w={30} h={34}>
          <circle cx="21" cy="7" r="5.5" stroke="#fff" strokeWidth="2" />
          <circle cx="9" cy="18" r="5" stroke="#fff" strokeWidth="2" />
          <path d="M1 33c0-12 16-12 16 0M15 14c6-3 13 0 14 8" stroke="#fff" strokeWidth="2" />
        </Svg>
        <button aria-label="显示隐藏的图标" className="pl-4">
          <Svg w={28} h={16}><path d="M1 15 14 2l13 13" stroke="#fff" strokeWidth="2.2" /></Svg>
        </button>
        <Svg w={34} h={28}>
          <path d="M10 6h20v18H8" stroke="#fff" strokeWidth="2" />
          <path d="M12 10h12v10H10zM31 11h3v8h-3z" fill="#fff" />
          <path d="M3 0v5M8 0v5M1 5h9v4c0 5-9 5-9 0zM5 12v15" stroke="#fff" strokeWidth="2" />
        </Svg>
        <Svg w={26} h={28}>
          <path d="M1 27C1 12 12 2 25 2" stroke="#777" strokeWidth="2" />
          <path d="M6 27C7 16 14 9 25 9M11 27c1-7 6-12 14-12M17 27c0-4 3-6 8-7" stroke="#fff" strokeWidth="2" />
          <circle cx="23" cy="25" r="3" fill="#fff" />
        </Svg>
        <Svg w={34} h={30}>
          <path d="M1 10h5l7-8v26l-7-8H1z" stroke="#fff" strokeWidth="2" />
          <path d="M18 10c3 3 3 7 0 10M22 6c6 5 6 13 0 18M27 2c8 8 8 18 0 26" stroke="#fff" strokeWidth="2" />
        </Svg>
        <Svg w={34} h={34}>
          <path d="m12 30 2-8L24 3c2-3 6-1 5 2L19 25zM14 22l5 3" stroke="#fff" strokeWidth="2" />
          <path d="M11 17c-9 0-13 9-7 13 5 2 8-3 10-8M26 14c8-1 8 6-3 9" stroke="#fff" strokeWidth="2" />
        </Svg>
        <div className="flex items-center gap-[30px]">
          <button aria-label="输入法" className="text-[27px] leading-8">中</button>
          <span className="flex h-[30px] w-[30px] items-center justify-center bg-white text-[28px] font-medium leading-8 text-black">M</span>
        </div>
        <time className="pl-1 text-center text-2xl leading-[37px]">10:14<br />2019/5/21</time>
        <button aria-label="操作中心" className="px-1">
          <Svg w={34} h={34}>
            <path d="M2 2h30v25H22l-5 6-5-6H2z" stroke="#fff" strokeWidth="2.2" />
          </Svg>
        </button>
        <span className="h-20 w-0.5 bg-[#555]" />
      </div>
    </footer>
  );
}

export default function App() {
  return (
    <div className="flex h-screen flex-col overflow-hidden bg-[#444] font-['Noto_Sans','Noto_Sans_CJK_SC',sans-serif] text-[#dcdcdc]">
      <Defs />
      <MenuBar />
      <div className="flex min-h-0 flex-1 border-b-2 border-t-2 border-[#222]">
        <ToolsPanel />
        <div className="w-1.5 shrink-0 border-x-2 border-[#202020] bg-[#333]" />
        <div className="flex min-w-0 flex-1 flex-col">
          <Timeline />
          <DocumentArea />
        </div>
        <div className="w-1.5 shrink-0 border-x-2 border-[#202020] bg-[#333]" />
        <div className="flex shrink-0 flex-col">
          <div className="flex h-6 shrink-0 items-center justify-between border-b border-[#1f1f1f] bg-[#2b2b2b] pl-[50px] pr-3">
            <Chev />
            <Chev right />
          </div>
          <div className="flex flex-1">
            <Dock />
            <div className="w-1.5 shrink-0 border-x-2 border-[#202020] bg-[#333]" />
            <PropertiesPanel />
          </div>
        </div>
      </div>
      <Taskbar />
    </div>
  );
}
